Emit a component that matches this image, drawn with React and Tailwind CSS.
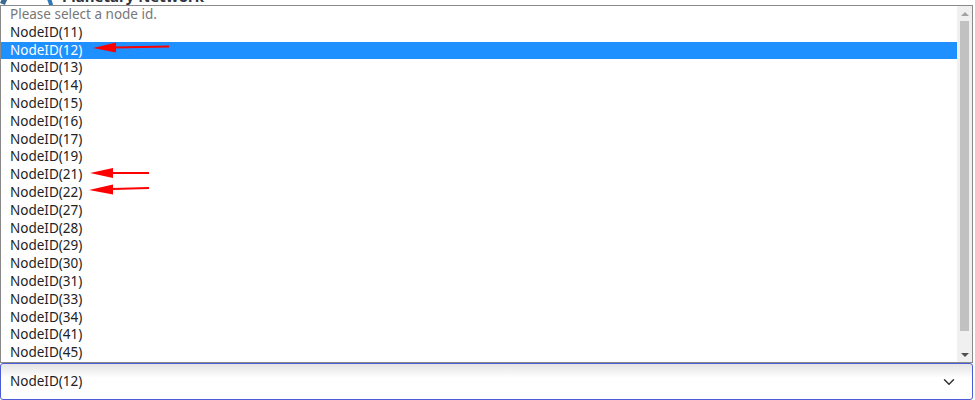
import { ChevronDown } from "lucide-react";

const nodes = [11, 12, 13, 14, 15, 16, 17, 19, 21, 22, 27, 28, 29, 30, 31, 33, 34, 41, 45];
const selected = 12;

function Arrow({ x1, y1, x2, y2 }) {
  return (
    <line x1={x1} y1={y1} x2={x2} y2={y2} stroke="#ff0000" strokeWidth="2" />
  );
}

export default function App() {
  return (
    <div className="relative w-[975px] h-[400px] bg-white overflow-hidden font-['Noto_Sans',sans-serif]">
      {/* header peeking out behind the open list */}
      <div className="h-[5px] overflow-hidden">
        <div className="flex items-end gap-2 -mt-[19px]">
          <svg width="54" height="24" viewBox="0 0 54 24">
            <path d="M0 22 C4 12 14 8 26 8 L26 10 C16 10 8 14 5 24 Z" fill="#3d6a90" />
            <path d="M38 8 C46 9 51 14 53 24 L49 24 C47 16 43 12 38 10 Z" fill="#2f78b8" />
          </svg>
          <span className="text-[15px] font-bold text-[#2d3540] leading-none mb-[1px]">Planetary Network</span>
        </div>
      </div>

      {/* open listbox */}
      <div className="flex h-[358px] border border-[#8a8a8a] mr-[2px] bg-white">
        <ul className="flex-1 text-[13.5px] text-[#222]">
          <li className="h-[17.8px] leading-[16.6px] pl-[9px] text-[#777]">Please select a node id.</li>
          {nodes.map((n) => (
            <li
              key={n}
              className={
                n === selected
                  ? "h-[17.8px] leading-[16.6px] pl-[9px] bg-[#1e90ff] text-white"
                  : "h-[17.8px] leading-[16.6px] pl-[9px]"
              }
            >
              NodeID({n})
            </li>
          ))}
        </ul>
        <div className="w-[15px] bg-[#f0f0f0] flex flex-col items-center">
          <div className="h-[15px] flex items-center justify-center">
            <div className="w-0 h-0 border-l-[4px] border-r-[4px] border-b-[4px] border-l-transparent border-r-transparent border-b-[#a3a3a3]" />
          </div>
          <div className="w-[9px] h-[310px] bg-[#c1c1c1]" />
          <div className="flex-1" />
          <div className="h-[15px] flex items-center justify-center">
            <div className="w-0 h-0 border-l-[4px] border-r-[4px] border-t-[4px] border-l-transparent border-r-transparent border-t-[#505050]" />
          </div>
        </div>
      </div>

      {/* select control */}
      <div className="flex items-center justify-between h-[37px] border border-[#4a5cd6] rounded-[3px] mr-[2px] pl-[9px] pr-[14px] bg-gradient-to-b from-[#e4e4e4] via-white via-40% to-white text-[13.5px] text-[#222]">
        <span className="-mt-[1px]">NodeID(12)</span>
        <ChevronDown size={18} strokeWidth={2} className="text-[#333]" />
      </div>

      {/* annotation arrows */}
      <svg className="absolute inset-0 pointer-events-none" width="975" height="400">
        <Arrow x1={169} y1={46.5} x2={115} y2={47.5} />
        <polygon points="93,48 116,42.5 116,52.5" fill="#ff0000" />
        <Arrow x1={149} y1={173} x2={112} y2={173} />
        <polygon points="90,173 113,168 113,178" fill="#ff0000" />
        <Arrow x1={149} y1={188} x2={112} y2={189} />
        <polygon points="89,190 113,184.5 113,194.5" fill="#ff0000" />
      </svg>
    </div>
  );
}
